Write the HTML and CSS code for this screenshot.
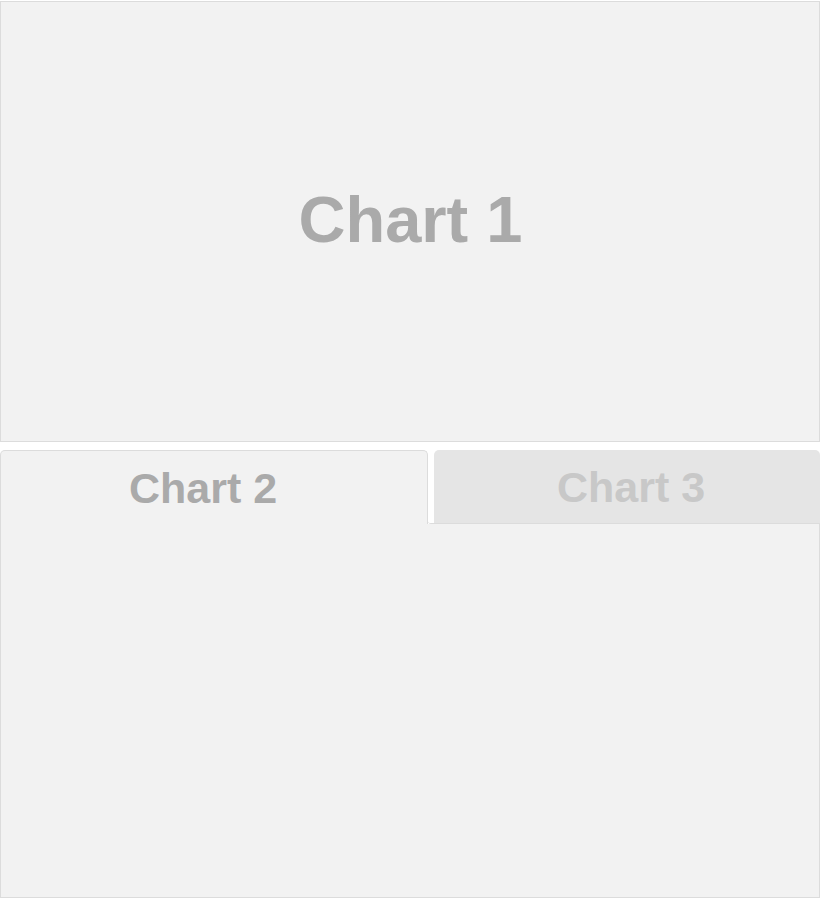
FILE: index.html
```html
<!DOCTYPE html>
<html lang="en">
<head>
    <meta charset="UTF-8">
    <meta name="viewport" content="width=device-width, initial-scale=1.0">
    <title>Charts</title>
    <link rel="stylesheet" href="styles.css">
</head>
<body>
    <div class="chart-main">Chart 1</div>

    <div class="tabs">
        <div class="tab active">Chart 2</div>
        <div class="tab-gap"></div>
        <div class="tab inactive">Chart 3</div>
    </div>
    <div class="tab-panel"></div>
</body>
</html>
```

FILE: styles.css
```css
body {
    margin: 0;
    padding-top: 1px;
    font-family: "Liberation Sans", Arial, sans-serif;
    font-weight: bold;
    background: #fff;
}
.chart-main {
    height: 435px;
    display: flex;
    align-items: center;
    justify-content: center;
    background: #f2f2f2;
    border: 1px solid #dcdcdc;
    color: #aaa;
    font-size: 65px;
    padding-left: 1px;
    padding-bottom: 4px;
}
.tabs {
    display: flex;
    margin-top: 8px;
    height: 74px;
}
.tab {
    display: flex;
    align-items: center;
    justify-content: center;
    font-size: 43px;
    padding-top: 1px;
    border-radius: 5px 5px 0 0;
}
.tab.active {
    width: 404px;
    padding-right: 22px;
    background: #f2f2f2;
    border: 1px solid #dcdcdc;
    border-bottom: none;
    color: #aaa;
}
.tab-gap {
    width: 6px;
    border-bottom: 1px solid #dcdcdc;
    border-bottom-left-radius: 3px;
}
.tab.inactive {
    flex: 1;
    padding-left: 8px;
    background: #e5e5e5;
    border-bottom: 1px solid #dcdcdc;
    color: #c8c8c8;
}
.tab-panel {
    height: 373px;
    background: #f2f2f2;
    border: 1px solid #dcdcdc;
    border-top: none;
}
```
